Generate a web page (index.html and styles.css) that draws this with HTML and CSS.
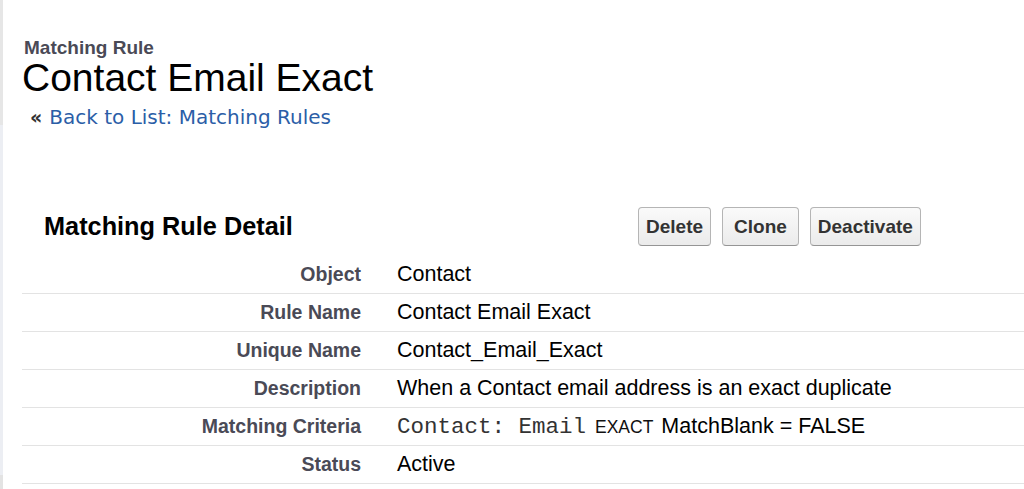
FILE: index.html
```html
<!DOCTYPE html>
<html>
<head>
<meta charset="utf-8">
<link rel="stylesheet" href="styles.css">
</head>
<body>
<div class="shell">
  <div class="rail"></div>
  <main class="page">
    <header class="page-head">
      <div class="page-type">Matching Rule</div>
      <h1 class="page-title">Contact Email Exact</h1>
      <div class="back"><span class="raquo">«</span> <a href="#">Back to List: Matching Rules</a></div>
    </header>

    <section class="detail">
      <div class="detail-head">
        <h2 class="detail-title">Matching Rule Detail</h2>
        <div class="buttons">
          <button class="btn">Delete</button>
          <button class="btn btn-wide">Clone</button>
          <button class="btn">Deactivate</button>
        </div>
      </div>
      <div class="rows">
        <div class="row"><div class="label">Object</div><div class="value">Contact</div></div>
        <div class="row"><div class="label">Rule Name</div><div class="value">Contact Email Exact</div></div>
        <div class="row"><div class="label">Unique Name</div><div class="value">Contact_Email_Exact</div></div>
        <div class="row"><div class="label">Description</div><div class="value">When a Contact email address is an exact duplicate</div></div>
        <div class="row"><div class="label">Matching Criteria</div><div class="value"><code class="mono">Contact: Email</code> <span class="op">EXACT</span> MatchBlank = FALSE</div></div>
        <div class="row"><div class="label">Status</div><div class="value">Active</div></div>
      </div>
    </section>
  </main>
</div>
</body>
</html>
```

FILE: styles.css
```css
html, body {
  margin: 0;
  padding: 0;
  background: #fff;
}
body {
  font-family: "Liberation Sans", Arial, sans-serif;
  color: #000;
  overflow: hidden;
}
.shell {
  display: flex;
  min-height: 489px;
}
.rail {
  width: 3px;
  flex: none;
  background: linear-gradient(#e6e6e6 0, #e6e6e6 125px, #eceef3 125px, #eceef3 475px, #e3e3e3 475px);
}
.page {
  flex: 1;
  padding-left: 19px;
}
.page-head {
  padding-top: 37px;
}
.page-type {
  font-size: 19px;
  line-height: 21px;
  font-weight: bold;
  color: #4a4a56;
  padding-left: 2px;
}
.page-title {
  margin: 0;
  font-size: 39px;
  line-height: 40px;
  font-weight: normal;
  color: #000;
}
.back {
  margin-top: 7px;
  padding-left: 8px;
  font-family: "DejaVu Sans", Verdana, sans-serif;
  font-size: 20px;
  line-height: 24px;
  color: #333;
  display: flex;
  align-items: baseline;
  gap: 7px;
}
.raquo {
  font-size: 19px;
  font-weight: bold;
}
.back a {
  color: #2b5ea7;
  text-decoration: none;
}
.detail {
  margin-top: 72px;
}
.detail-head {
  display: flex;
  align-items: center;
  padding: 6px 0 10px 22px;
}
.detail-title {
  margin: 0;
  width: 594px;
  font-size: 25.3px;
  font-weight: bold;
  color: #000;
}
.buttons {
  display: flex;
  gap: 11px;
}
.btn {
  height: 39px;
  padding: 0 7px;
  font-family: "Liberation Sans", Arial, sans-serif;
  font-size: 19px;
  font-weight: bold;
  color: #333;
  background: linear-gradient(#fafafa, #ebebeb);
  border: 1px solid #b5b5b5;
  border-bottom-color: #959595;
  border-radius: 4px;
}
.btn-wide {
  padding: 0 11px;
}
.row {
  display: flex;
  align-items: center;
  height: 37px;
  border-bottom: 1px solid #e3e3e3;
}
.label {
  width: 339px;
  flex: none;
  text-align: right;
  font-size: 19.5px;
  font-weight: bold;
  color: #4a4a56;
}
.value {
  padding-left: 36px;
  font-size: 21.5px;
  color: #000;
  white-space: nowrap;
}
.mono {
  font-family: "Liberation Mono", "Courier New", monospace;
  font-size: 22.5px;
  color: #333;
}
.op {
  font-size: 17.5px;
  color: #111;
  margin: 0 2px 0 3px;
}
```
